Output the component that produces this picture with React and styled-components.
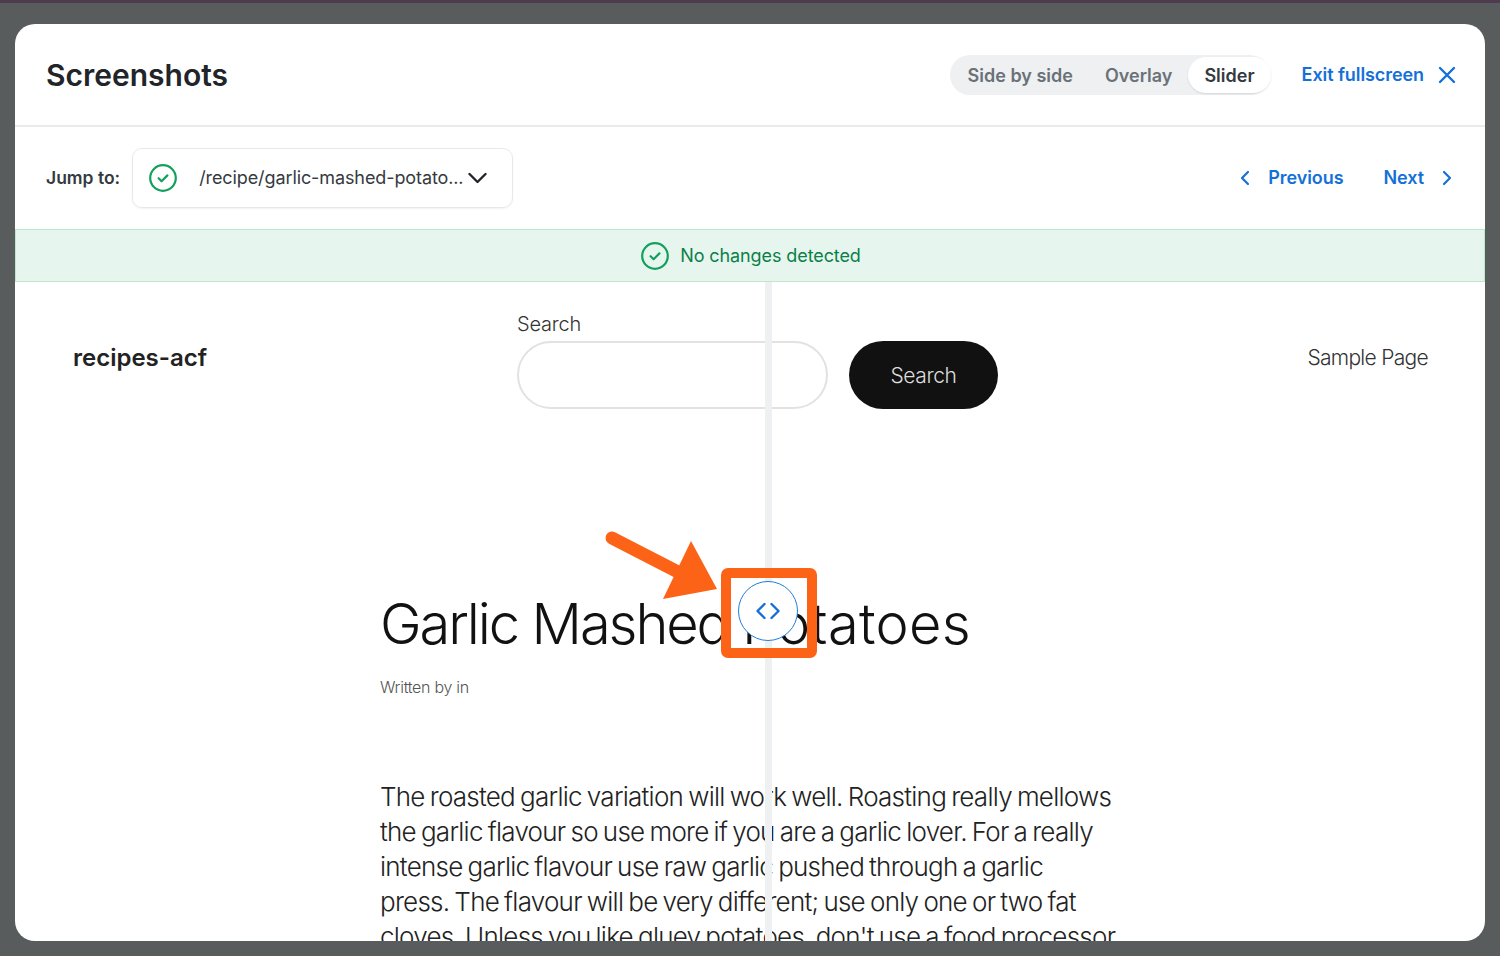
import React from "react";
import styled, { createGlobalStyle } from "styled-components";

const Global = createGlobalStyle`
  html, body { margin: 0; padding: 0; background: #585c5d; }
  body { font-family: Inter, "Liberation Sans", sans-serif; overflow: hidden; }
  * { box-sizing: border-box; }
`;

const Page = styled.div`
  height: 956px;
  padding: 21px 15px 15px;
  background: #585c5d;
  border-top: 3px solid #4f3a4f;
`;

const Modal = styled.div`
  position: relative;
  height: 917px;
  background: #fff;
  border-radius: 20px;
  overflow: hidden;
  display: flex;
  flex-direction: column;
`;

const Header = styled.header`
  height: 103px;
  flex-shrink: 0;
  padding: 0 29px 0 31px;
  border-bottom: 2px solid #e8eaec;
  display: flex;
  align-items: center;
  justify-content: space-between;
`;

const Title = styled.h1`
  margin: 0;
  font-size: 30px;
  font-weight: 600;
  color: #212529;
`;

const HeaderRight = styled.div`
  display: flex;
  align-items: center;
`;

const Toggle = styled.div`
  width: 320px;
  height: 40px;
  padding: 2px;
  margin-right: 32px;
  background: #eef0f2;
  border-radius: 20px;
  display: flex;
  align-items: center;
`;

const ToggleItem = styled.div`
  height: 36px;
  padding: 1px 16px 0;
  border-radius: 18px;
  display: flex;
  align-items: center;
  white-space: nowrap;
  flex-shrink: 0;
  font-size: 18px;
  font-weight: 600;
  color: ${(p) => (p.$active ? "#343a40" : "#6a7278")};
  background: ${(p) => (p.$active ? "#fff" : "transparent")};
  box-shadow: ${(p) => (p.$active ? "0 1px 2px rgba(30, 40, 50, 0.12)" : "none")};
`;

const Link = styled.a`
  display: flex;
  align-items: center;
  gap: ${(p) => p.$gap || 14}px;
  margin-left: ${(p) => p.$ml || 0}px;
  font-size: 18px;
  font-weight: 600;
  letter-spacing: -0.08px;
  color: #1470d8;
`;

const Toolbar = styled.div`
  height: 102px;
  flex-shrink: 0;
  padding: 0 33px 1px 31px;
  display: flex;
  align-items: center;
  justify-content: space-between;
`;

const Jump = styled.div`
  display: flex;
  align-items: center;
  gap: 12px;
`;

const JumpLabel = styled.span`
  font-size: 17.5px;
  font-weight: 600;
  color: #343a40;
`;

const Select = styled.div`
  width: 381px;
  height: 60px;
  padding: 0 25px 0 16px;
  border: 1px solid #e6e8ea;
  border-radius: 10px;
  box-shadow: 0 1px 2px rgba(30, 40, 50, 0.06);
  display: flex;
  align-items: center;
`;

const SelectText = styled.span`
  margin-left: 22px;
  flex: 1;
  font-size: 18px;
  letter-spacing: -0.1px;
  color: #343a40;
  white-space: nowrap;
`;

const Pager = styled.div`
  display: flex;
  align-items: center;
`;

const Banner = styled.div`
  height: 53px;
  flex-shrink: 0;
  padding-left: 2px;
  background: #e6f6ee;
  border: 1px solid #bde8ce;
  display: flex;
  align-items: center;
  justify-content: center;
  gap: 11px;
  font-size: 18px;
  letter-spacing: -0.1px;
  color: #0c7f4a;
`;

const Preview = styled.div`
  flex: 1;
  min-height: 0;
`;

const SiteHeader = styled.div`
  height: 127px;
  padding: 29px 57px 0 58px;
  display: flex;
`;

const Logo = styled.div`
  width: 444px;
  margin-top: 32px;
  font-size: 24px;
  font-weight: 600;
  color: #222;
`;

const SearchForm = styled.div`
  width: 481px;
`;

const SearchLabel = styled.div`
  height: 30px;
  padding-top: 1px;
  font-size: 20px;
  font-weight: 300;
  letter-spacing: -0.2px;
  color: #333;
`;

const SearchRow = styled.div`
  display: flex;
  gap: 21px;
`;

const SearchInput = styled.div`
  width: 311px;
  height: 68px;
  border: 2px solid #e2e2e2;
  border-radius: 34px;
`;

const SearchButton = styled.div`
  width: 149px;
  height: 68px;
  border-radius: 34px;
  background: #111;
  color: #ddd;
  display: flex;
  align-items: center;
  justify-content: center;
  font-size: 21px;
  font-weight: 300;
  letter-spacing: -0.4px;
`;

const Nav = styled.div`
  margin: 34px 0 0 auto;
  font-size: 21px;
  font-weight: 300;
  letter-spacing: -0.7px;
  color: #333;
`;

const Article = styled.article`
  margin-left: 365px;
  padding-top: 180px;
`;

const PostTitle = styled.h2`
  margin: 0;
  font-size: 56px;
  line-height: 70px;
  font-weight: 300;
  color: #111;
  white-space: nowrap;
`;

const TitleWords = styled.span`
  letter-spacing: ${(p) => p.$ls}px;
`;

const Meta = styled.div`
  margin-top: 18px;
  font-size: 16px;
  font-weight: 300;
  letter-spacing: -0.3px;
  color: #555;
`;

const Body = styled.p`
  margin: 81.5px 0 0;
  font-size: 26px;
  line-height: 35px;
  font-weight: 300;
  letter-spacing: -0.75px;
  word-spacing: -1.5px;
  color: #222;
  white-space: nowrap;
`;

const SliderBar = styled.div`
  position: absolute;
  left: 750px;
  top: 258px;
  bottom: 0;
  width: 7px;
  background: #eef0f2;
`;

const SliderHandle = styled.div`
  position: absolute;
  left: 723px;
  top: 557px;
  width: 60px;
  height: 60px;
  border-radius: 50%;
  background: #fff;
  border: 1.5px solid #1f7fd8;
  display: flex;
  align-items: center;
  justify-content: center;
`;

const Annotation = styled.svg`
  position: absolute;
  left: 585px;
  top: 504px;
`;

const CheckCircle = ({ size = 28 }) => (
  <svg width={size} height={size} viewBox="0 0 28 28" fill="none">
    <circle cx="14" cy="14" r="12.8" stroke="#14a05c" strokeWidth="2.2" />
    <path d="M9.6 14.2l3 3 5.8-5.8" stroke="#14a05c" strokeWidth="2.2" strokeLinecap="round" strokeLinejoin="round" />
  </svg>
);

const Chevron = ({ d, color = "#1470d8", w = 10, h = 16, sw = 2.2, vb = "0 0 10 16" }) => (
  <svg width={w} height={h} viewBox={vb} fill="none">
    <path d={d} stroke={color} strokeWidth={sw} strokeLinecap="round" strokeLinejoin="round" />
  </svg>
);

export default function App() {
  return (
    <>
      <Global />
      <Page>
        <Modal>
          <Header>
            <Title>Screenshots</Title>
            <HeaderRight>
              <Toggle>
                <ToggleItem>Side by side</ToggleItem>
                <ToggleItem>Overlay</ToggleItem>
                <ToggleItem $active>Slider</ToggleItem>
              </Toggle>
              <Link>
                Exit fullscreen
                <svg width="18" height="18" viewBox="0 0 18 18" fill="none">
                  <path d="M2 2l14 14M16 2L2 16" stroke="#1470d8" strokeWidth="2.4" strokeLinecap="round" />
                </svg>
              </Link>
            </HeaderRight>
          </Header>

          <Toolbar>
            <Jump>
              <JumpLabel>Jump to:</JumpLabel>
              <Select>
                <CheckCircle />
                <SelectText>/recipe/garlic-mashed-potato...</SelectText>
                <Chevron d="M1.500 2l8 8 8-8" color="#212529" w={19} h={12} vb="0 0 19 12" sw={2.4} />
              </Select>
            </Jump>
            <Pager>
              <Link $gap={18}>
                <Chevron d="M8 2L2 8l6 6" />
                Previous
              </Link>
              <Link $ml={40} $gap={18}>
                Next
                <Chevron d="M2 2l6 6-6 6" />
              </Link>
            </Pager>
          </Toolbar>

          <Banner>
            <CheckCircle />
            No changes detected
          </Banner>

          <Preview>
            <SiteHeader>
              <Logo>recipes-acf</Logo>
              <SearchForm>
                <SearchLabel>Search</SearchLabel>
                <SearchRow>
                  <SearchInput />
                  <SearchButton>Search</SearchButton>
                </SearchRow>
              </SearchForm>
              <Nav>Sample Page</Nav>
            </SiteHeader>
            <Article>
              <PostTitle>
                <TitleWords $ls={-2.1}>Garlic Mashed </TitleWords>
                <TitleWords $ls={0.3}>Potatoes</TitleWords>
              </PostTitle>
              <Meta>Written by in</Meta>
              <Body>
                The roasted garlic variation will work well. Roasting really mellows
                <br />
                the garlic flavour so use more if you are a garlic lover. For a really
                <br />
                intense garlic flavour use raw garlic pushed through a garlic
                <br />
                press. The flavour will be very different; use only one or two fat
                <br />
                cloves. Unless you like gluey potatoes, don't use a food processor
              </Body>
            </Article>
          </Preview>

          <SliderBar />
          <SliderHandle>
            <svg width="28" height="18" viewBox="0 0 28 18" fill="none">
              <path d="M10.500 2L3.500 9l7 7M17.500 2l7 7-7 7" stroke="#1470d8" strokeWidth="2.4" strokeLinecap="round" strokeLinejoin="round" />
            </svg>
          </SliderHandle>

          <Annotation width="240" height="140" viewBox="0 0 240 140" fill="none">
            <path d="M12 10l68 35" stroke="#fd6317" strokeWidth="13" strokeLinecap="round" />
            <path d="M91 13l26 48-54 10z" fill="#fd6317" />
            <rect x="126" y="45" width="86" height="80" rx="2" stroke="#fd6317" strokeWidth="10" />
          </Annotation>
        </Modal>
      </Page>
    </>
  );
}
